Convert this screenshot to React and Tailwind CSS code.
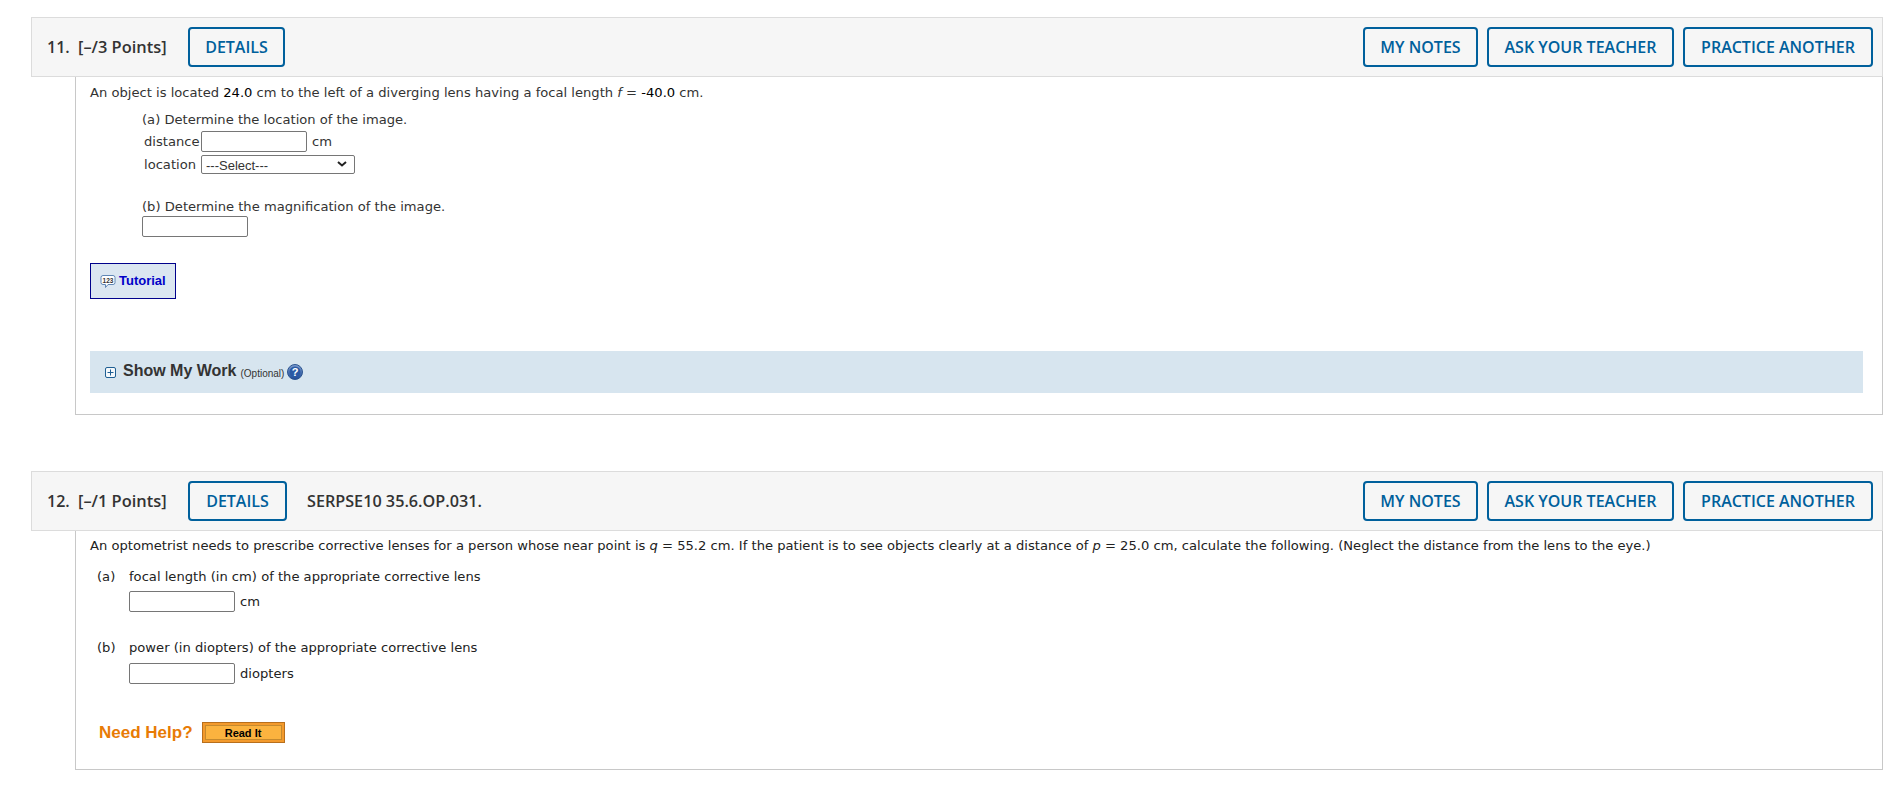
import { useState } from "react";

const headFont = "font-['Open_Sans','Noto_Sans',sans-serif]";
const bodyFont = "font-['DejaVu_Sans',Verdana,sans-serif]";

const HeaderButton = ({ children, className = "" }) => (
  <button
    className={`h-10 rounded-[4px] border-2 border-[#00609c] text-center text-[16px] font-semibold text-[#00609c] ${className}`}
  >
    {children}
  </button>
);

const QuestionHeader = ({ num, points, detailsWidth, code }) => (
  <div className={`flex h-[60px] items-center border border-[#dcdcdc] bg-[#f6f6f6] pl-[15px] pr-[9px] ${headFont}`}>
    <span className="w-[31px] text-[16px] font-semibold text-[#333]">{num}</span>
    <span className="w-[110px] text-[16.400px] font-semibold text-[#333]">{points}</span>
    <HeaderButton className={detailsWidth}>DETAILS</HeaderButton>
    {code && <span className="ml-[20px] text-[16.200px] font-semibold text-[#333]">{code}</span>}
    <div className="ml-auto flex gap-[9px]">
      <HeaderButton className="w-[115px]">MY NOTES</HeaderButton>
      <HeaderButton className="w-[187px]">ASK YOUR TEACHER</HeaderButton>
      <HeaderButton className="w-[190px]">PRACTICE ANOTHER</HeaderButton>
    </div>
  </div>
);

const AnswerInput = ({ className = "" }) => (
  <input type="text" className={`h-[21px] w-[106px] rounded-[2px] border border-[#767676] bg-white ${className}`} />
);

const TutorialIcon = () => (
  <svg width="16" height="15" viewBox="0 0 16 15" className="shrink-0">
    <path d="M3 1.500h10a2 2 0 0 1 2 2v5a2 2 0 0 1-2 2H8l-2.500 3v-3H3a2 2 0 0 1-2-2v-5a2 2 0 0 1 2-2z" fill="#fff" stroke="#5f86b5" strokeWidth="1" />
    <text x="8" y="8.500" textAnchor="middle" fontSize="6.500" fontWeight="700" fontFamily="Liberation Sans" fill="#333">123</text>
  </svg>
);

const PlusBox = () => (
  <svg width="11" height="11" viewBox="0 0 11 11" className="shrink-0">
    <rect x="0.500" y="0.500" width="10" height="10" rx="1.500" fill="#f4f8fb" stroke="#1f5f93" />
    <path d="M2.500 5.500h6M5.500 2.500v6" stroke="#1f5f93" />
  </svg>
);

const HelpIcon = () => (
  <svg width="16" height="16" viewBox="0 0 16 16" className="shrink-0">
    <defs>
      <linearGradient id="helpFill" x1="0" y1="0" x2="0" y2="1">
        <stop offset="0" stopColor="#7f9fd0" />
        <stop offset="1" stopColor="#1f4a96" />
      </linearGradient>
    </defs>
    <circle cx="8" cy="8" r="7.500" fill="url(#helpFill)" stroke="#2c5590" />
    <circle cx="8" cy="8" r="5.500" fill="#2b5aa4" />
    <text x="8" y="12" textAnchor="middle" fontSize="11" fontWeight="700" fontFamily="Liberation Sans" fill="#fff">?</text>
  </svg>
);

export default function App() {
  const [location, setLocation] = useState("");

  return (
    <div className="min-h-[796px] bg-white pl-[31px] pr-[14px] pt-[17px]">
      {/* Question 11 */}
      <QuestionHeader num="11." points="[–/3 Points]" detailsWidth="w-[97px]" />
      <div className={`ml-[44px] h-[338px] border-b border-l border-r border-[#c8c8c8] pl-[14px] pr-[19px] text-[13.120px] text-[#333] ${bodyFont}`}>
        <p className="pt-[8px] leading-[16px]">
          An object is located <span className="text-black">24.0</span> cm to the left of a diverging lens having a focal length <i>f</i> = <span className="text-black">-40.0</span> cm.
        </p>
        <div className="pl-[52px]">
          <p className="mt-[11px] leading-[16px]">(a) Determine the location of the image.</p>
          <div className="mt-[3px] flex h-[21px] items-center">
            <span className="ml-[2px] w-[57px]">distance</span>
            <AnswerInput />
            <span className="ml-[5px]">cm</span>
          </div>
          <div className="mt-[3px] flex h-[19px] items-center">
            <span className="ml-[2px] w-[57px]">location</span>
            <div className="relative h-[19px] w-[154px]">
              <select
                value={location}
                onChange={(e) => setLocation(e.target.value)}
                className="h-[19px] w-full appearance-none rounded-[2px] border border-[#767676] bg-white pl-[4px] font-['Liberation_Sans',sans-serif] text-[13px] text-[#333]"
              >
                <option value="">---Select---</option>
              </select>
              <svg width="10" height="6" viewBox="0 0 10 6" className="pointer-events-none absolute right-[8px] top-[6px]">
                <path d="M1 1l4 3.500L9 1" fill="none" stroke="#222" strokeWidth="2" />
              </svg>
            </div>
          </div>
          <p className="mt-[25px] leading-[16px]">(b) Determine the magnification of the image.</p>
          <AnswerInput className="mt-[1px] block" />
        </div>
        <button className="mt-[26px] flex h-[36px] w-[86px] items-center gap-[3px] border border-[#00008b] bg-[#dbe6f1] pl-[9px] font-['Liberation_Sans',sans-serif] text-[13px] font-bold text-[#0000c8]">
          <TutorialIcon />
          Tutorial
        </button>
        <div className="mt-[52px] flex h-[42px] items-center bg-[#d7e5ef] pl-[15px] font-['Liberation_Sans',sans-serif] text-[#333]">
          <PlusBox />
          <span className="-mt-[2px] ml-[7px] text-[16px] font-bold">Show My Work</span>
          <span className="ml-[4px] mt-[3px] text-[10px]">(Optional)</span>
          <span className="ml-[3px]"><HelpIcon /></span>
        </div>
      </div>

      {/* Question 12 */}
      <div className="mt-[56px]">
        <QuestionHeader num="12." points="[–/1 Points]" detailsWidth="w-[99px]" code="SERPSE10 35.6.OP.031." />
      </div>
      <div className={`ml-[44px] h-[239px] border-b border-l border-r border-[#c8c8c8] pl-[14px] pr-[19px] text-[13.120px] text-[#222] ${bodyFont}`}>
        <p className="pt-[7px] leading-[16px]">
          An optometrist needs to prescribe corrective lenses for a person whose near point is <i>q</i> = 55.2 cm. If the patient is to see objects clearly at a distance of <i>p</i> = 25.0 cm, calculate the following. (Neglect the distance from the lens to the eye.)
        </p>
        <div className="mt-[15px] flex pl-[7px] leading-[16px]">
          <span className="w-[32px]">(a)</span>
          <div>
            <p>focal length (in cm) of the appropriate corrective lens</p>
            <div className="mt-[6px] flex items-center">
              <AnswerInput />
              <span className="ml-[5px]">cm</span>
            </div>
          </div>
        </div>
        <div className="mt-[28px] flex pl-[7px] leading-[16px]">
          <span className="w-[32px]">(b)</span>
          <div>
            <p>power (in diopters) of the appropriate corrective lens</p>
            <div className="mt-[7px] flex items-center">
              <AnswerInput />
              <span className="ml-[5px]">diopters</span>
            </div>
          </div>
        </div>
        <div className="mt-[36px] flex items-center pl-[9px] font-['Liberation_Sans',sans-serif]">
          <span className="text-[17px] font-bold text-[#e87b05]">Need Help?</span>
          <button className="ml-[9px] flex h-[21px] w-[83px] items-center justify-center border border-[#b86f1c] bg-[#f39a2c] p-[2px]">
            <span className="flex h-full w-full items-center justify-center border border-[#c58a2e] bg-[#fbb33f] text-[11px] font-bold text-black">Read It</span>
          </button>
        </div>
      </div>
    </div>
  );
}
